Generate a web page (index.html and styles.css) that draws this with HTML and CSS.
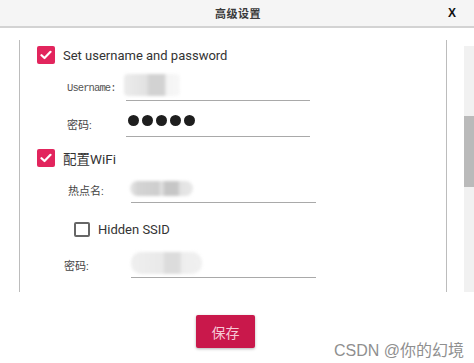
FILE: index.html
```html
<!DOCTYPE html>
<html>
<head>
<meta charset="utf-8">
<link rel="stylesheet" href="styles.css">
</head>
<body>
<div class="header">
  <div class="title">高级设置</div>
  <div class="close">X</div>
</div>
<div class="area">
  <div class="panel">
    <div class="cbrow r1">
      <span class="cb on"><svg width="12" height="10" viewBox="0 0 12 10"><path d="M1.5 5.2 L4.5 8 L10.5 1.8" fill="none" stroke="#fff" stroke-width="2.2" stroke-linecap="round" stroke-linejoin="round"/></svg></span>
      <span class="cbtext">Set username and password</span>
    </div>
    <div class="frow f1">
      <span class="lbl mono">Username:</span>
      <div class="field w1"><span class="blob b1"></span></div>
    </div>
    <div class="frow f2">
      <span class="lbl">密码:</span>
      <div class="field w1"><span class="dots"><i></i><i></i><i></i><i></i><i></i></span></div>
    </div>
    <div class="cbrow r2">
      <span class="cb on"><svg width="12" height="10" viewBox="0 0 12 10"><path d="M1.5 5.2 L4.5 8 L10.5 1.8" fill="none" stroke="#fff" stroke-width="2.2" stroke-linecap="round" stroke-linejoin="round"/></svg></span>
      <span class="cbtext">配置WiFi</span>
    </div>
    <div class="frow f3">
      <span class="lbl">热点名:</span>
      <div class="field w2"><span class="blob b2"></span></div>
    </div>
    <div class="cbrow r3">
      <span class="cb off"></span>
      <span class="cbtext">Hidden SSID</span>
    </div>
    <div class="frow f4">
      <span class="lbl">密码:</span>
      <div class="field w2"><span class="blob b3"></span></div>
    </div>
  </div>
  <div class="track"><div class="thumb"></div></div>
</div>
<div class="footer">
  <button class="save">保存</button>
</div>
<div class="watermark">CSDN @你的幻境</div>
</body>
</html>
```
FILE: styles.css
```css
* { box-sizing: border-box; }
html, body { margin: 0; padding: 0; background: #fff; }
body {
  width: 474px; height: 363px; overflow: hidden; position: relative;
  font-family: Roboto, "Noto Sans CJK SC", sans-serif; color: #333;
}
.header {
  height: 28px; background: #f5f5f5; border-bottom: 2px solid #d3d3d3;
  display: flex; align-items: center; justify-content: center; position: relative;
}
.title { font-size: 11px; font-weight: bold; color: #3a3a3a; letter-spacing: 0.5px; margin-left: 2px; }
.close { position: absolute; left: 448px; top: 6px; font-size: 12px; font-weight: bold; color: #111; font-family: "Liberation Sans", sans-serif; }
.area { display: flex; height: 252px; margin-top: 12px; }
.panel {
  margin-left: 19px; width: 428px; height: 252px;
  border-left: 1.5px solid #bcbcbc; border-right: 1.5px solid #bcbcbc;
  padding-top: 6px; padding-left: 17px;
}
.track { margin-left: 17px; margin-top: 6px; width: 10px; height: 246px; background: #f1f1f1; padding-top: 70px; }
.thumb { width: 10px; height: 71px; background: #bababa; }
.cbrow { display: flex; align-items: center; height: 18px; }
.cb { width: 18px; height: 18px; border-radius: 2px; display: flex; align-items: center; justify-content: center; flex: none; }
.cb.on { background: #e2255d; }
.cb.off { width: 16px; height: 15px; border: 2px solid #666; margin-left: 37px; }
.cbtext { margin-left: 8px; font-size: 13px; color: #333; }
.r2 .cbtext { font-size: 13.5px; }
.r2 { margin-top: 12px; }
.r3 { margin-top: 17px; }
.frow { display: flex; align-items: center; height: 27px; }
.f1 { margin-top: 10px; }
.f2 { margin-top: 9px; }
.f3 { margin-top: 9px; }
.f4 { margin-top: 13px; }
.lbl { font-size: 11px; color: #444; flex: none; }
.mono { font-family: "Liberation Mono", monospace; font-size: 10.5px; letter-spacing: -0.9px; color: #555; }
.f1 .lbl, .f2 .lbl { margin-left: 30px; width: 59px; }
.f3 .lbl { margin-left: 31px; width: 63px; }
.f4 .lbl { margin-left: 27px; width: 67px; }
.field { height: 27px; border-bottom: 1.5px solid #a9a9a9; display: flex; align-items: center; }
.w1 { width: 184px; }
.w2 { width: 185px; }
.blob { display: block; filter: blur(1.5px); }
.b1 { width: 56px; height: 22px; margin-left: -2px; margin-top: -4px; border-radius: 4px;
  background: linear-gradient(90deg, #ececec 0, #e2e2e2 40%, #d2d2d2 45%, #d2d2d2 72%, #f4f4f4 76%, #f7f7f7 100%); }
.b2 { width: 63px; height: 15px; margin-left: -1px; margin-top: -2px; border-radius: 8px;
  background: linear-gradient(90deg, #e6e6e6 0, #d4d4d4 12%, #cecece 45%, #e4e4e4 50%, #c6c6c6 56%, #c6c6c6 75%, #e2e2e2 80%, #e8e8e8 100%); }
.b3 { width: 71px; height: 22px; margin-left: 0; margin-top: -2px; border-radius: 10px;
  background: linear-gradient(90deg, #efefef 0, #e9e9e9 45%, #dcdcdc 48%, #dcdcdc 68%, #eeeeee 72%, #f0f0f0 100%); }
.dots { display: flex; gap: 3px; margin-left: 2px; margin-top: -6px; }
.dots i { width: 11px; height: 11px; border-radius: 50%; background: #1e1e1e; display: block; }
.footer { padding-top: 23px; padding-left: 196px; }
.save {
  width: 59px; height: 33px; border: none; border-radius: 2px; background: #c9184b;
  color: #f6c9d6; font-size: 14px; font-family: "Noto Sans CJK SC", sans-serif;
  box-shadow: 0 1px 3px rgba(0,0,0,0.3); padding: 0;
}
.watermark { position: absolute; left: 334px; top: 337px; font-size: 16px; color: #8f8f8f; font-family: "Liberation Sans", "Noto Sans CJK SC", sans-serif; }
```
